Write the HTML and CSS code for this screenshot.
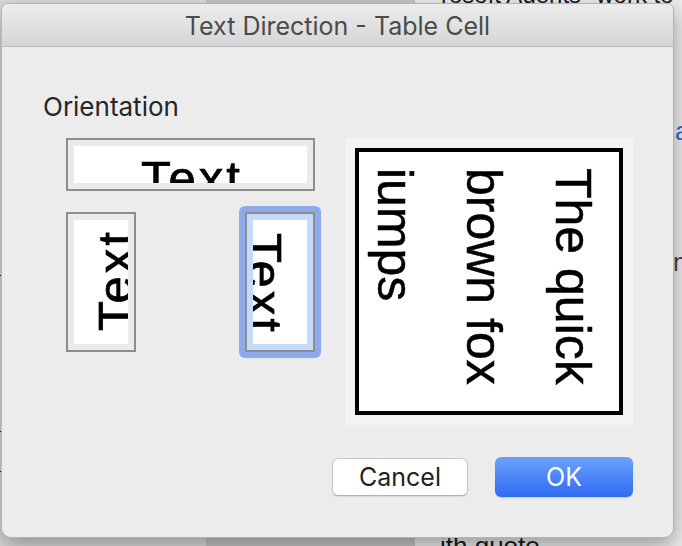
FILE: index.html
```html
<!DOCTYPE html>
<html>
<head>
<meta charset="utf-8">
<link rel="stylesheet" href="styles.css">
</head>
<body>
<div class="desk">
  <div class="col col1">
    <i class="tick t1"></i>
    <i class="tick t2"></i>
    <i class="tick t3"></i>
  </div>
  <div class="col col2"></div>
  <div class="col col3">
    <div class="doc-top">rosoft Agents" work to</div>
    <div class="doc-link">a</div>
    <div class="doc-m">m</div>
    <div class="doc-bottom">ith quote</div>
  </div>
</div>

<div class="dialog">
  <div class="titlebar">Text Direction - Table Cell</div>
  <div class="body">
    <div class="label">Orientation</div>
    <div class="content">
      <div class="orient">
        <div class="pbox wide"><div class="pw horiz">Text</div></div>
        <div class="vrow">
          <div class="pbox tall"><div class="pw vert up">Text</div></div>
          <div class="ring"><div class="pbox tall sel"><div class="pw vert down">Text</div></div></div>
        </div>
      </div>
      <div class="sample">
        <div class="frame">
          <div class="stext">The quick<br>brown fox<br>iumps</div>
        </div>
      </div>
    </div>
    <div class="buttons">
      <button class="btn cancel">Cancel</button>
      <button class="btn ok">OK</button>
    </div>
  </div>
</div>
</body>
</html>
```
FILE: styles.css
```css
html, body {
  margin: 0;
  padding: 0;
}
body {
  width: 682px;
  height: 546px;
  overflow: hidden;
  position: relative;
  font-family: "Liberation Sans", Arial, sans-serif;
}

/* background document behind the dialog */
.desk {
  display: flex;
  width: 682px;
  height: 546px;
}
.col {
  height: 546px;
  overflow: hidden;
}
.col1 {
  width: 206px;
  background: #dcdcdc;
  display: flex;
  flex-direction: column;
  align-items: flex-start;
}
.tick {
  display: block;
  width: 2px;
  height: 1px;
  background: #111;
}
.t1 { margin-top: 275px; }
.t2 { margin-top: 155px; }
.t3 { margin-top: 39px; }
.col2 {
  width: 209px;
  background: #c6c6c6;
}
.col3 {
  flex: 1;
  background: #ececec;
  display: flex;
  flex-direction: column;
  white-space: nowrap;
  color: #1a1a1a;
}
.doc-top {
  font-size: 24px;
  line-height: 24px;
  height: 24px;
  margin-top: -17px;
  padding-left: 26px;
}
.doc-link {
  font-size: 26px;
  line-height: 26px;
  margin-top: 111px;
  padding-left: 260px;
  color: #1b6fd6;
}
.doc-m {
  font-size: 26px;
  line-height: 26px;
  margin-top: 105px;
  padding-left: 258px;
  color: #444;
}
.doc-bottom {
  font-size: 26px;
  line-height: 26px;
  margin-top: auto;
  margin-bottom: -13px;
  padding-left: 25px;
  color: #1a1a1a;
}

/* dialog window */
.dialog {
  position: absolute;
  left: 1px;
  top: 3px;
  width: 673px;
  box-sizing: border-box;
  background: #ececec;
  border: 1px solid #b4b4b4;
  border-radius: 7px 7px 10px 10px;
  box-shadow: 0 8px 22px rgba(0, 0, 0, 0.35);
  overflow: hidden;
}
.titlebar {
  height: 39px;
  padding-top: 3px;
  line-height: 39px;
  text-align: center;
  font-family: "Inter", "Liberation Sans", sans-serif;
  font-size: 25px;
  color: #4b4b4b;
  background: linear-gradient(#ececec, #d6d6d6);
  border-bottom: 1px solid #bcbcbc;
}
.body {
  padding: 44px 40px 40px 41px;
  display: flex;
  flex-direction: column;
}
.label {
  font-family: "Inter", "Liberation Sans", sans-serif;
  font-size: 26px;
  line-height: 32px;
  color: #262626;
}
.content {
  display: flex;
  align-items: flex-start;
  margin-top: 15px;
  margin-left: 23px;
}
.orient {
  width: 250px;
  display: flex;
  flex-direction: column;
}

/* preview boxes */
.pbox {
  border: 2px solid #8d8d8d;
  padding: 6px;
  background: #ebebeb;
}
.pw {
  background: #fff;
  overflow: hidden;
  font-family: "Liberation Sans", Arial, sans-serif;
  font-size: 49px;
  line-height: 49px;
  letter-spacing: 3px;
  -webkit-text-stroke: 0.7px #000;
  color: #000;
  text-align: center;
  white-space: nowrap;
}
.horiz {
  height: 37px;
  box-sizing: border-box;
  padding-top: 8px;
  padding-left: 3px;
}
.vrow {
  display: flex;
  justify-content: space-between;
  align-items: flex-start;
  margin-top: 21px;
}
.tall .pw {
  width: 54px;
  height: 124px;
}
.vert {
  writing-mode: vertical-rl;
  box-sizing: border-box;
  padding-top: 3px;
}
.up {
  padding-right: 17px;
  transform: rotate(180deg);
}
.down {
  padding-right: 18px;
}
.ring {
  margin: -6px;
  padding: 6px;
  background: #8eaaea;
  border-radius: 6px;
}
.sel {
  background: #c4d9fb;
}

/* sample preview */
.sample {
  margin-left: 30px;
  width: 288px;
  height: 287px;
  box-sizing: border-box;
  padding: 10px;
  background: #f3f3f3;
}
.frame {
  height: 267px;
  box-sizing: border-box;
  border: 4px solid #000;
  background: #fff;
  overflow: hidden;
}
.stext {
  writing-mode: vertical-rl;
  width: 260px;
  height: 100%;
  box-sizing: border-box;
  padding-top: 16px;
  padding-right: 2px;
  font-family: "Liberation Sans", Arial, sans-serif;
  font-size: 50px;
  line-height: 89px;
  -webkit-text-stroke: 0.5px #000;
  color: #000;
  white-space: nowrap;
}

/* buttons */
.buttons {
  display: flex;
  justify-content: flex-end;
  align-items: center;
  gap: 27px;
  margin-top: 32px;
}
.btn {
  font-family: "Inter", "Liberation Sans", sans-serif;
  font-size: 25px;
  padding: 0;
  margin: 0;
  border-radius: 6px;
  cursor: default;
}
.cancel {
  width: 136px;
  height: 38px;
  background: #fff;
  color: #222;
  border: 1px solid #c6c6c6;
  border-bottom-color: #b3b3b3;
  box-shadow: 0 1px 1px rgba(0, 0, 0, 0.08);
}
.ok {
  width: 138px;
  height: 40px;
  color: #fff;
  border: none;
  background: linear-gradient(#6da2f8, #2d6bf4);
  box-shadow: 0 1px 1px rgba(0, 0, 0, 0.12);
}
```
